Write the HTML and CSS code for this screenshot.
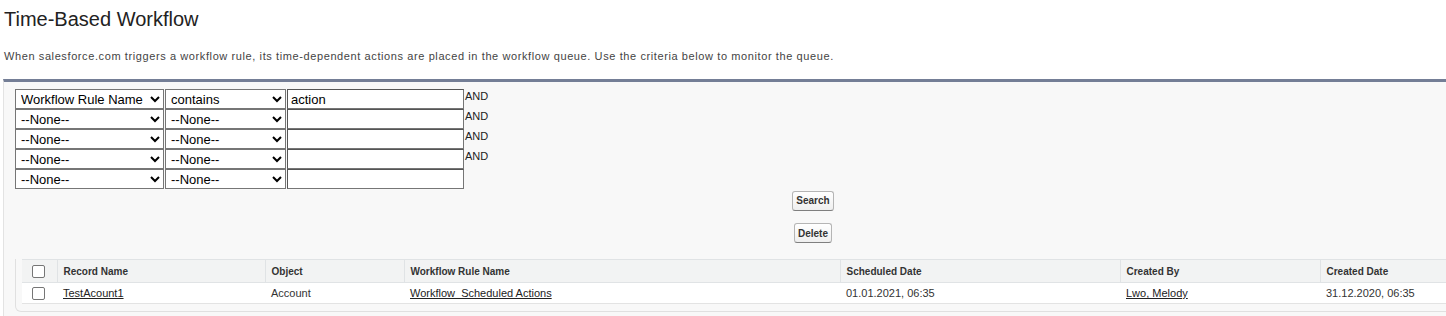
FILE: index.html
```html
<!DOCTYPE html>
<html lang="en">
<head>
  <meta charset="UTF-8">
  <title>Time-Based Workflow</title>
  <link rel="stylesheet" href="styles.css">
</head>
<body>

  <h1 class="page-title">Time-Based Workflow</h1>
  <p class="page-desc">When salesforce.com triggers a workflow rule, its time-dependent actions are placed in the workflow queue. Use the criteria below to monitor the queue.</p>

  <div class="panel">
    <!-- Filter criteria -->
    <div class="filters">
      <div class="filter-row">
        <select class="sel-field"><option>Workflow Rule Name</option></select>
        <select class="sel-op"><option>contains</option></select>
        <input class="inp-value" type="text" value="action">
        <span class="and">AND</span>
      </div>
      <div class="filter-row">
        <select class="sel-field"><option>--None--</option></select>
        <select class="sel-op"><option>--None--</option></select>
        <input class="inp-value" type="text">
        <span class="and">AND</span>
      </div>
      <div class="filter-row">
        <select class="sel-field"><option>--None--</option></select>
        <select class="sel-op"><option>--None--</option></select>
        <input class="inp-value" type="text">
        <span class="and">AND</span>
      </div>
      <div class="filter-row">
        <select class="sel-field"><option>--None--</option></select>
        <select class="sel-op"><option>--None--</option></select>
        <input class="inp-value" type="text">
        <span class="and">AND</span>
      </div>
      <div class="filter-row">
        <select class="sel-field"><option>--None--</option></select>
        <select class="sel-op"><option>--None--</option></select>
        <input class="inp-value" type="text">
      </div>
    </div>

    <!-- Buttons -->
    <div class="btn-row search-row"><button class="btn">Search</button></div>
    <div class="btn-row delete-row"><button class="btn">Delete</button></div>

    <!-- Queue table -->
    <div class="list-wrap">
      <table class="list">
        <colgroup>
          <col style="width:35px">
          <col style="width:208px">
          <col style="width:139px">
          <col style="width:436px">
          <col style="width:280px">
          <col style="width:200px">
          <col>
        </colgroup>
        <thead>
          <tr>
            <th><span class="check"></span></th>
            <th>Record Name</th>
            <th>Object</th>
            <th>Workflow Rule Name</th>
            <th>Scheduled Date</th>
            <th>Created By</th>
            <th>Created Date</th>
          </tr>
        </thead>
        <tbody>
          <tr>
            <td><span class="check"></span></td>
            <td><a href="#">TestAcount1</a></td>
            <td>Account</td>
            <td><a href="#">Workflow_Scheduled Actions</a></td>
            <td>01.01.2021, 06:35</td>
            <td><a href="#">Lwo, Melody</a></td>
            <td>31.12.2020, 06:35</td>
          </tr>
        </tbody>
      </table>
    </div>
  </div>

</body>
</html>
```

FILE: styles.css
```css
/* Global */
body {
  margin: 0;
  font-family: 'Liberation Sans', Arial, sans-serif;
  color: #333;
  background-color: #fff;
  overflow: hidden;
}

.page-title {
  font-size: 20px;
  font-weight: normal;
  color: #222;
  margin: 7px 0 0 4px;
  line-height: 24px;
}

.page-desc {
  font-size: 11px;
  letter-spacing: 0.6px;
  color: #444;
  margin: 18px 0 0 4px;
  line-height: 15px;
}

/* Panel */
.panel {
  margin: 15px 0 0 3px;
  width: 1608px;
  background-color: #f8f8f8;
  border-top: 3px solid #747e96;
  border-left: 1px solid #e3e3e3;
  padding: 7px 0 4px 11px;
  box-sizing: border-box;
}

/* Filters */
.filter-row {
  display: flex;
  align-items: flex-start;
  height: 20px;
}

.filter-row select,
.filter-row input {
  font-family: 'Liberation Sans', Arial, sans-serif;
  font-size: 13px;
  height: 20px;
  box-sizing: border-box;
  border: 1px solid #767676;
  background-color: #fff;
  color: #000;
  margin: 0 1px 0 0;
  padding: 0 1px;
  border-radius: 0;
}

.sel-field { width: 149px; }
.sel-op { width: 121px; }

.inp-value {
  width: 177px;
  padding: 0 3px !important;
  border-top-color: #555 !important;
  border-left-color: #555 !important;
}

.and {
  font-size: 11px;
  color: #222;
  line-height: 12px;
  margin-top: 1px;
}

/* Buttons */
.btn-row {
  text-align: center;
}

.search-row { margin-top: 1px; }
.delete-row { margin-top: 12px; }

.btn {
  font-family: 'Liberation Sans', Arial, sans-serif;
  font-size: 10px;
  font-weight: bold;
  color: #333;
  height: 20px;
  padding: 0 3px;
  border: 1px solid #b5b5b5;
  border-bottom-color: #7f7f7f;
  border-radius: 3px;
  background: linear-gradient(#fff, #efefef);
  cursor: pointer;
}

/* Table */
.list-wrap {
  margin-top: 16px;
  width: 1580px;
  border: 1px solid #e0e0e0;
  border-top: none;
  border-radius: 0 0 6px 6px;
  padding: 0 0 7px 6px;
}

.list {
  width: 100%;
  border-collapse: collapse;
  table-layout: fixed;
  background-color: #fff;
  font-size: 11px;
}

.list th {
  background-color: #f2f3f3;
  font-size: 10px;
  font-weight: bold;
  color: #333;
  text-align: left;
  height: 22px;
  padding: 0 6px;
  border-top: 1px solid #e0e3e5;
  border-bottom: 1px solid #e0e3e5;
  border-left: 1px solid #e0e3e5;
}

.list th:first-child { border-left: none; }

.list td {
  height: 20px;
  padding: 0 6px;
  color: #333;
  border-bottom: 1px solid #e3e3e3;
}

.list th:first-child,
.list td:first-child {
  padding: 0 0 0 10px;
}

.list a {
  color: #222;
  text-decoration: underline;
}

.check {
  display: block;
  width: 11px;
  height: 11px;
  border: 1px solid #767676;
  border-radius: 2px;
  background-color: #fff;
}
```
